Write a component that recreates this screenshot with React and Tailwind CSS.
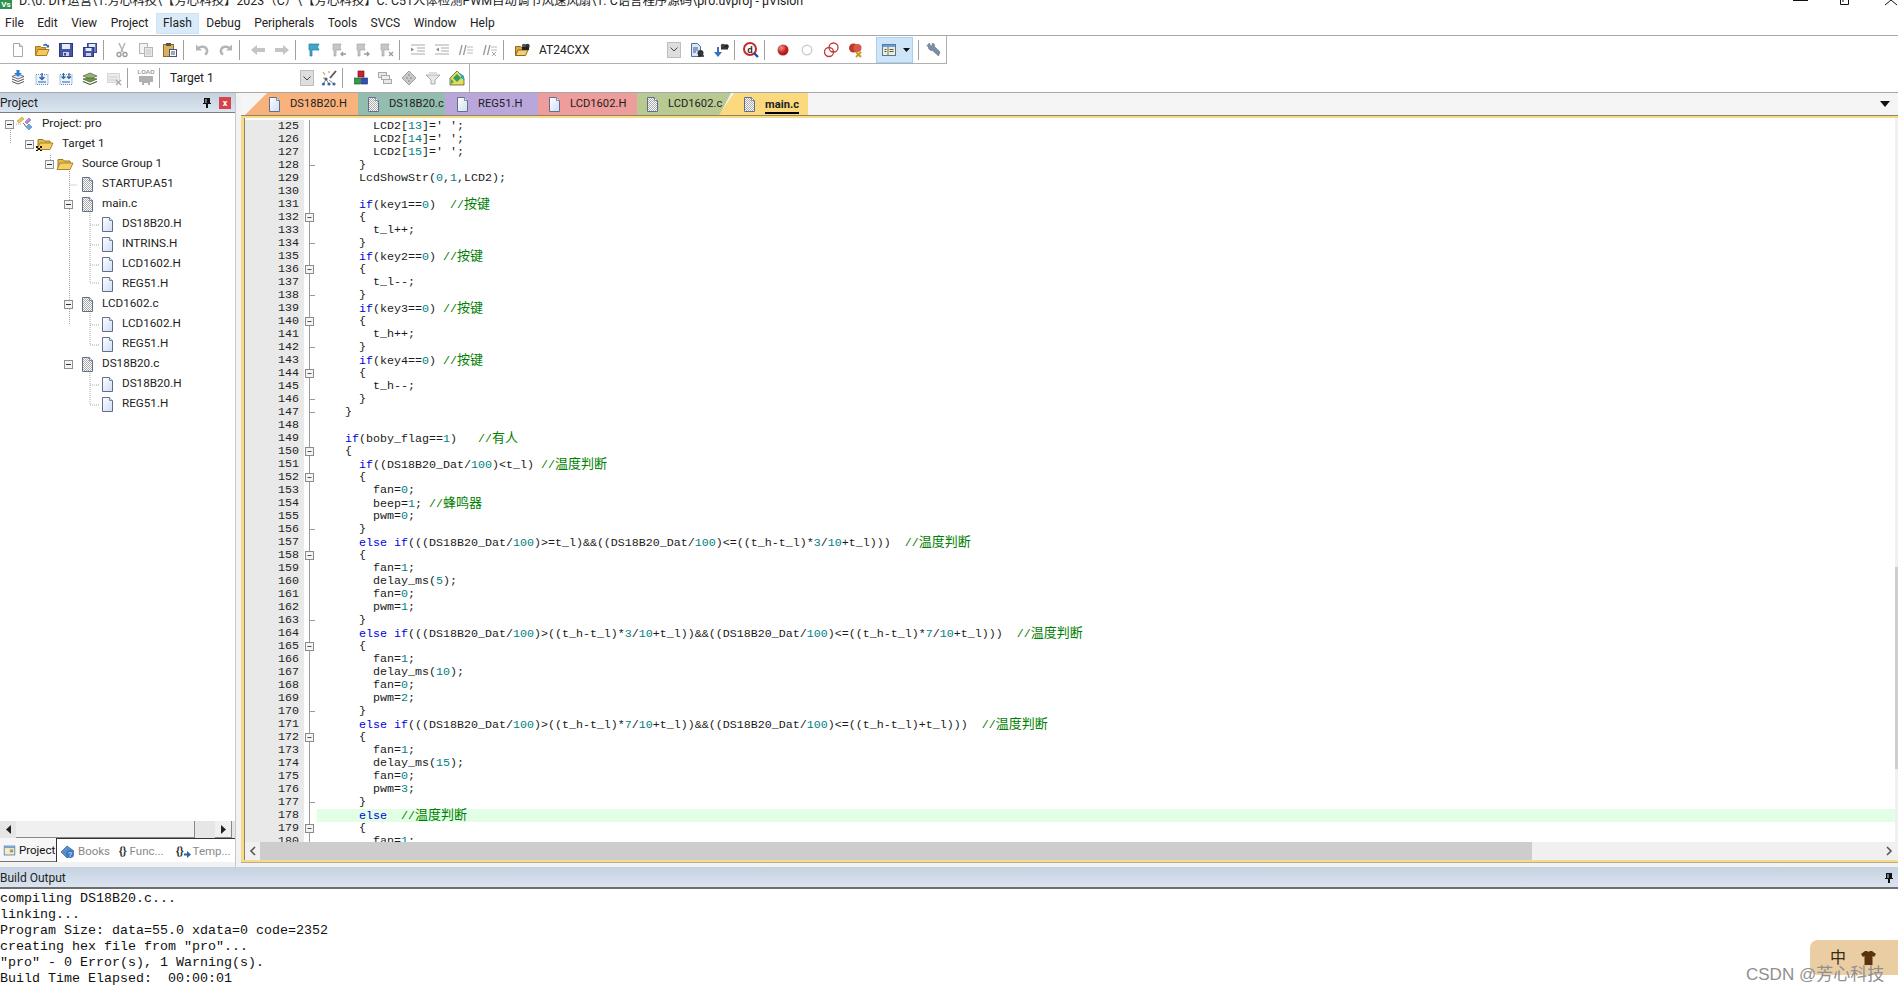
import React from "react";

const UI = { fontFamily: 'Roboto,"Noto Sans CJK SC",sans-serif' };
const MONO = { fontFamily: '"Liberation Mono","Noto Sans CJK SC",monospace' };

const Svg = ({ children, s = 16, w, h, vb = "0 0 16 16" }) => (
  <svg width={w || s} height={h || s} viewBox={vb} className="shrink-0 block">{children}</svg>
);

const DocH = () => (
  <Svg w={13} h={15} vb="0 0 13 15">
    <defs><linearGradient id="dh" x1="0" y1="0" x2="1" y2="1"><stop offset="0" stopColor="#fff" /><stop offset="1" stopColor="#cfdcf2" /></linearGradient></defs>
    <path d="M1.5.5h7l3 3v11h-10z" fill="url(#dh)" stroke="#5f6f8c" />
    <path d="M8.5.5v3h3" fill="#e8eef8" stroke="#7a88a0" />
  </Svg>
);
const DocC = () => (
  <Svg w={13} h={15} vb="0 0 13 15">
    <defs><pattern id="hatch" width="2" height="2" patternUnits="userSpaceOnUse"><rect width="2" height="2" fill="#fff" /><rect width="1" height="1" fill="#a9a9a9" /><rect x="1" y="1" width="1" height="1" fill="#a9a9a9" /></pattern></defs>
    <path d="M1.5.5h7l3 3v11h-10z" fill="url(#hatch)" stroke="#5f6f8c" />
    <path d="M8.5.5v3h3" fill="#eef" stroke="#7a88a0" />
  </Svg>
);
const FolderI = ({ chk }) => (
  <Svg w={18} h={14} vb="0 0 18 14">
    <path d="M2 12V2.5h5l1.500 1.500H14v2" fill="#e5b94e" stroke="#9c7a22" />
    <path d="M1 12.500 4 6h13l-3 6.500z" fill="#f5cf6a" stroke="#a98424" />
    {chk && <g fill="#111"><rect x="0" y="9" width="2" height="2" /><rect x="2" y="11" width="2" height="2" /><rect x="4" y="9" width="2" height="2" /><rect x="0" y="13" width="2" height="1" /><rect x="4" y="13" width="2" height="1" /></g>}
  </Svg>
);
const Exp = () => (
  <span className="w-[9px] h-[9px] border border-[#8f8f8f] bg-[#f4f4f4] flex items-center justify-center shrink-0">
    <span className="w-[5px] h-px bg-[#333]" />
  </span>
);

const G = "#b5b5b5";
const icons = {
  new: <Svg><path d="M3.500 1.500h6l3 3v10h-9z" fill="#fdfdfd" stroke="#a8a8a8" /><path d="M9.500 1.500v3h3" fill="#e8e8e8" stroke="#a8a8a8" /></Svg>,
  open: <Svg><path d="M1.500 13.500v-9h5l1 1h4v2" fill="#e0a93a" stroke="#a67a1e" /><path d="M1.500 13.500 4 7.500h11l-2.500 6z" fill="#f5c95e" stroke="#a67a1e" /><path d="M9 3c2-2 4-1.500 5 .5l1-1v3h-3l1-1c-1-1-2-1.500-3.500-.5z" fill="#3a66b0" /></Svg>,
  save: <Svg><rect x="1.500" y="1.500" width="13" height="13" fill="#4455aa" stroke="#2b3a80" /><rect x="4" y="2" width="8" height="5" fill="#e8ecf8" /><rect x="5" y="10" width="6" height="4" fill="#c9cfe6" /><rect x="6" y="11" width="2" height="2.500" fill="#3a4a90" /></Svg>,
  saveall: <Svg><rect x="5.500" y="1.500" width="9" height="9" fill="#6a7cc4" stroke="#3a4a90" /><rect x="7" y="2" width="6" height="3" fill="#e8ecf8" /><rect x="1.500" y="5.500" width="10" height="9" fill="#4455aa" stroke="#2b3a80" /><rect x="3.500" y="6" width="6" height="3" fill="#e8ecf8" /><rect x="4" y="11" width="5" height="3" fill="#c9cfe6" /></Svg>,
  cut: <Svg><path d="M5 1l4 9M11 1 7 10" stroke={G} strokeWidth="1.500" fill="none" /><circle cx="5" cy="12.500" r="2" fill="none" stroke="#999" strokeWidth="1.300" /><circle cx="11" cy="12.500" r="2" fill="none" stroke="#999" strokeWidth="1.300" /></Svg>,
  copy: <Svg><rect x="1.500" y="1.500" width="8" height="10" fill="#f4f4f4" stroke={G} /><rect x="6.500" y="5.500" width="8" height="9" fill="#e8e8e8" stroke={G} /><path d="M8 8h5M8 10h5M8 12h5" stroke="#c8c8c8" /></Svg>,
  paste: <Svg><rect x="1.500" y="2.500" width="10" height="12" fill="#d8b25c" stroke="#8c6d24" /><rect x="4" y="1" width="5" height="3" fill="#555" /><rect x="7.500" y="7.500" width="7" height="7" fill="#f4f6fb" stroke="#44557a" /><path d="M9 10h4M9 12h4" stroke="#44557a" /></Svg>,
  undo: <Svg><path d="M4 6.500c3-3 8-2 9 1.500.5 2-.5 3.500-2 4.500" fill="none" stroke={G} strokeWidth="2.500" /><path d="M2 2.500v6h6z" fill={G} /></Svg>,
  redo: <Svg><path d="M12 6.500c-3-3-8-2-9 1.500-.5 2 .5 3.500 2 4.500" fill="none" stroke={G} strokeWidth="2.500" /><path d="M14 2.500v6H8z" fill={G} /></Svg>,
  back: <Svg><path d="M1 8l6-5v3h8v4H7v3z" fill="#c4c4c4" /></Svg>,
  fwd: <Svg><path d="M15 8 9 3v3H1v4h8v3z" fill="#c4c4c4" /></Svg>,
  flag: <Svg><path d="M3 2h10l-1.500 3L13 8H6v6H4V8H3z" fill="#3fa8c8" stroke="#1f7f9c" strokeWidth=".7" /></Svg>,
  flag1: <Svg><path d="M3 2h8l-1 3 1 3H6v6H4V8H3z" fill="#c6c6c6" stroke="#a8a8a8" strokeWidth=".7" /><path d="M16 12h-5m2-2-2 2 2 2" stroke="#9a9a9a" strokeWidth="1.300" fill="none" /></Svg>,
  flag2: <Svg><path d="M3 2h8l-1 3 1 3H6v6H4V8H3z" fill="#c6c6c6" stroke="#a8a8a8" strokeWidth=".7" /><path d="M10 12h5m-2-2 2 2-2 2" stroke="#9a9a9a" strokeWidth="1.300" fill="none" /></Svg>,
  flag3: <Svg><path d="M3 2h8l-1 3 1 3H6v6H4V8H3z" fill="#c6c6c6" stroke="#a8a8a8" strokeWidth=".7" /><path d="M11 10l4 4m0-4-4 4" stroke="#9a9a9a" strokeWidth="1.300" fill="none" /></Svg>,
  indent: <Svg><path d="M1 3h14M7 6h8M7 9h8M1 12h14" stroke="#a8a8a8" /><path d="M1 5.500l3 2-3 2z" fill="#8a8a8a" /></Svg>,
  outdent: <Svg><path d="M1 3h14M7 6h8M7 9h8M1 12h14" stroke="#a8a8a8" /><path d="M5 5.500l-3 2 3 2z" fill="#8a8a8a" /></Svg>,
  cmt: <Svg><path d="M4 3 1.500 13M8 3 5.500 13" stroke="#999" strokeWidth="1.300" /><path d="M9 5h6M9 8h6M9 11h6" stroke="#bbb" /></Svg>,
  uncmt: <Svg><path d="M4 3 1.500 13M8 3 5.500 13" stroke="#999" strokeWidth="1.300" /><path d="M9 5h6M9 8h6" stroke="#bbb" /><path d="M10 10l4 4m0-4-4 4" stroke="#aaa" /></Svg>,
  find: <Svg><path d="M1.500 13.500v-9h5l1 1h3v2" fill="#e0a93a" stroke="#8c6a1a" /><path d="M1.500 13.500 4 8h10l-2.500 5.500z" fill="#f2cf78" stroke="#8c6a1a" /><circle cx="10" cy="4" r="2.200" fill="#555" /><circle cx="13.500" cy="4" r="2.200" fill="#333" /><rect x="8" y="5" width="7" height="3" fill="#222" /></Svg>,
  doclist: <Svg><path d="M2.500 1.500h6l3 3v10h-9z" fill="#dbe6f6" stroke="#5a6f95" /><path d="M4 6h5M4 8h5M4 10h3" stroke="#3a5a96" /><circle cx="11.500" cy="11" r="3" fill="#333" /><path d="M9 14h6" stroke="#222" strokeWidth="1.500" /></Svg>,
  bino: <Svg><path d="M4 1v5H1l4 5 4-5H6V1z" transform="translate(0 4)" fill="#3a6ec0" /><circle cx="10" cy="4" r="2.300" fill="#444" /><circle cx="13.500" cy="4.500" r="2.300" fill="#222" /><rect x="8" y="5" width="7" height="2.500" fill="#333" /></Svg>,
  dbg: <Svg><circle cx="7" cy="7" r="6" fill="#fff" stroke="#c62828" strokeWidth="2" /><text x="7" y="10.500" fontSize="9" fontWeight="700" textAnchor="middle" fill="#222" fontFamily="Liberation Sans">d</text><path d="M11 11l4 4" stroke="#2b4d9c" strokeWidth="2.400" /></Svg>,
  bp: <Svg><defs><radialGradient id="rb" cx=".35" cy=".3"><stop offset="0" stopColor="#f4928a" /><stop offset="1" stopColor="#b81c1c" /></radialGradient></defs><circle cx="8" cy="8" r="5.500" fill="url(#rb)" /></Svg>,
  bpo: <Svg><circle cx="8" cy="8" r="4.800" fill="#fff" stroke="#cfcfcf" strokeWidth="1.500" /></Svg>,
  bp2: <Svg><circle cx="6" cy="10" r="4.500" fill="#fff" stroke="#c23a3a" strokeWidth="1.300" /><circle cx="10.500" cy="5.500" r="4.500" fill="none" stroke="#c23a3a" strokeWidth="1.300" /></Svg>,
  bpx: <Svg><circle cx="6.500" cy="6" r="4.500" fill="#c0392b" /><circle cx="10.500" cy="6" r="4" fill="#d8584c" /><path d="M9 10l5 5m0-5-5 5" stroke="#c69a1e" strokeWidth="2" /></Svg>,
  win: <Svg><rect x="1.500" y="2.500" width="13" height="11" fill="#f6edc0" stroke="#4a7ab0" /><rect x="2" y="3" width="12" height="2" fill="#6aa0d8" /><path d="M7 5v8" stroke="#4a7ab0" /><path d="M8.500 7.500h4M8.500 9.500h4M3.500 7.500h2M3.500 9.500h2" stroke="#555" /></Svg>,
  wrench: <Svg><path d="M2 3.500 4.500 1l1 3 2-.5-.5-2c2-.5 3 1 2.500 3L15 10l-1.500 4-6-5.500c-2 .5-4-1-4-3z" fill="#7d8ea6" stroke="#4f5f78" strokeWidth=".5" /></Svg>,
  trans: <Svg><path d="M2 6.500 8 4l6 2.500L8 9z" fill="#eef" stroke="#444" strokeWidth=".8" /><path d="M2 9l6 2.500L14 9M2 11.500 8 14l6-2.500" fill="none" stroke="#444" strokeWidth=".9" /><path d="M6.500 0h3v3H12L8 7 4 3h2.500z" fill="#2f7fd0" /></Svg>,
  b1: <Svg><rect x="2" y="4.500" width="12" height="10" fill="#eef4fb" stroke="#5a8ab8" strokeDasharray="1 1" /><path d="M8 3v6M5.500 7 8 9.500 10.500 7" stroke="#2a62a8" strokeWidth="1.400" fill="none" /><path d="M4 12h8" stroke="#2a62a8" /></Svg>,
  b2: <Svg><rect x="2" y="4.500" width="12" height="10" fill="#eef4fb" stroke="#5a8ab8" strokeDasharray="1 1" /><path d="M5.500 3v5M11 3v5M3.500 6.500l2 2 2-2M9 6.500l2 2 2-2" stroke="#2a62a8" strokeWidth="1.200" fill="none" /><path d="M4 12h8" stroke="#2a62a8" /></Svg>,
  b3: <Svg><path d="M1 6l7-3 7 3-7 3z" fill="#9ab07a" stroke="#50603a" strokeWidth=".7" /><path d="M1 9l7 3 7-3-7-1z" fill="#6f9a4a" stroke="#3d5a28" strokeWidth=".7" /><path d="M1 11.500 8 14.500l7-3" fill="none" stroke="#3d5a28" strokeWidth="1.100" /></Svg>,
  b4: <Svg><rect x="1.500" y="3.500" width="12" height="9" fill="#ececec" stroke={G} strokeDasharray="1 1" /><path d="M3 7h9M3 10h9" stroke="#ccc" /><path d="M10 10l5 5m0-5-5 5" stroke="#a8a8a8" strokeWidth="1.300" /></Svg>,
  load: <Svg w={18} h={20} vb="0 0 18 20"><text x="9" y="6" fontSize="6" fontWeight="700" textAnchor="middle" fill="#999" fontFamily="Liberation Sans">LOAD</text><path d="M2 8h14v6h-3v3h-2v-2H7v2H5v-3H2z" fill="#b0b0b0" /></Svg>,
  wand: <Svg><path d="M9 8 15 1" stroke="#555" strokeWidth="1.800" /><path d="M4 5 2 2M8 3V1M2 8h2" stroke="#d08a20" /><circle cx="5" cy="9" r="1.600" fill="#3a66b0" /><circle cx="2.500" cy="14" r="1.600" fill="#3a66b0" /><circle cx="8" cy="14" r="1.600" fill="#3a66b0" /><circle cx="13" cy="14" r="1.600" fill="#3a66b0" /><path d="M5 9 2.500 14M5 9l3 5M8 10l5 4" stroke="#5a5a5a" strokeWidth=".7" /></Svg>,
  cube: <Svg><rect x="5" y="1" width="6" height="6" fill="#d3202a" stroke="#5a1010" strokeWidth=".6" /><rect x="1.500" y="8" width="6" height="6" fill="#2e9e4a" stroke="#124a22" strokeWidth=".6" /><rect x="8.500" y="8" width="6" height="6" fill="#3050c0" stroke="#14245c" strokeWidth=".6" /></Svg>,
  win2: <Svg><rect x="1.500" y="2.500" width="8" height="5" fill="#e8e8e8" stroke="#a9a9a9" /><rect x="4.500" y="5.500" width="8" height="4" fill="#f0f0f0" stroke="#a9a9a9" /><rect x="6.500" y="9.500" width="8" height="4" fill="#e8e8e8" stroke="#a9a9a9" /></Svg>,
  dia: <Svg><path d="M8 1l7 7-7 7-7-7z" fill="#c9c9c9" stroke="#a0a0a0" /><path d="M8 4v2M5 8h2M9 8h2M8 10v2" stroke="#888" /></Svg>,
  fun: <Svg><path d="M1 5h14l-5 5v4H6v-4z" fill="#e8e8e8" stroke="#aaa" /><path d="M4 2h8v3H4z" fill="#ddd" /></Svg>,
  gem: <Svg><path d="M8 1l7 7v7H1V8z" fill="#e8dd50" stroke="#444" strokeWidth=".7" /><path d="M8 4l4 4-4 4-4-4z" fill="#2f9e60" /><path d="M11 3l4 3v4l-3-2z" fill="#2aa8c8" /><path d="M2 9l3 3-3 2z" fill="#38b068" /></Svg>,
};

const Tool = ({ n }) => <span className="w-6 h-[26px] flex items-center justify-center shrink-0">{icons[n]}</span>;
const Sep = () => <span className="w-2 h-5 shrink-0 flex justify-start pl-[1px]"><span className="w-px h-full bg-[#a0a0a0]" /></span>;
const Combo = () => (
  <span className="w-[14px] h-[16px] bg-[#dedede] border border-[#bdbdbd] flex items-center justify-center shrink-0">
    <svg width="8" height="5" viewBox="0 0 8 5"><path d="M.5.500 4 4 7.500.5" fill="none" stroke="#444" /></svg>
  </span>
);

const menus = ["File", "Edit", "View", "Project", "Flash", "Debug", "Peripherals", "Tools", "SVCS", "Window", "Help"];

const tabs = [
  { t: "DS18B20.H", w: "w-[113px]", bg: "bg-[#f9b27c]", c: "[clip-path:polygon(22px_0,100%_0,100%_100%,0_100%)]", pl: "pl-[23px]", I: DocH },
  { t: "DS18B20.c", w: "w-[87px]", bg: "bg-[#93bdae]", c: "", pl: "pl-[9px]", I: DocC },
  { t: "REG51.H", w: "w-[93px]", bg: "bg-[#b9a6da]", c: "", pl: "pl-[11px]", I: DocH },
  { t: "LCD1602.H", w: "w-[99px]", bg: "bg-[#ee9c9c]", c: "", pl: "pl-[10px]", I: DocH },
  { t: "LCD1602.c", w: "w-[94px]", bg: "bg-[#b8c992]", c: "[clip-path:polygon(0_0,100%_0,88%_100%,0_100%)]", pl: "pl-[9px]", I: DocC },
];

const tree = [
  { l: 5, t: "Project: pro", e: 1, I: "proj" },
  { l: 25, t: "Target 1", e: 1, I: "tgt" },
  { l: 45, t: "Source Group 1", e: 1, I: "fold" },
  { l: 64, t: "STARTUP.A51", I: "c" },
  { l: 64, t: "main.c", e: 1, I: "c" },
  { l: 84, t: "DS18B20.H", I: "h", n: 1 },
  { l: 84, t: "INTRINS.H", I: "h", n: 1 },
  { l: 84, t: "LCD1602.H", I: "h", n: 1 },
  { l: 84, t: "REG51.H", I: "h", n: 1 },
  { l: 64, t: "LCD1602.c", e: 1, I: "c" },
  { l: 84, t: "LCD1602.H", I: "h", n: 1 },
  { l: 84, t: "REG51.H", I: "h", n: 1 },
  { l: 64, t: "DS18B20.c", e: 1, I: "c" },
  { l: 84, t: "DS18B20.H", I: "h", n: 1 },
  { l: 84, t: "REG51.H", I: "h", n: 1 },
];

const ProjI = () => (
  <Svg w={18} h={16} vb="0 0 18 16">
    <path d="M1 5l5-4 2 2-5 4z" fill="#ecc94b" stroke="#a38a20" strokeWidth=".5" />
    <path d="M9 6l4-4 2 2-4 4z" fill="#c08ad8" stroke="#7a4a9a" strokeWidth=".5" />
    <path d="M10 11l3-3 3 3-3 3z" fill="#6aa8e0" stroke="#3a6ea0" strokeWidth=".5" />
    <path d="M7 7c2 1 2 3 3 4" stroke="#666" fill="none" />
  </Svg>
);

const L8 = 8, L6 = 6, L4 = 4;
const code = [
  [125, L8, "LCD2[13]=' ';"], [126, L8, "LCD2[14]=' ';"], [127, L8, "LCD2[15]=' ';"],
  [128, L6, "}", "e"], [129, L6, "LcdShowStr(0,1,LCD2);"], [130, 0, ""],
  [131, L6, "if(key1==0)  //按键"], [132, L6, "{", "b"], [133, L8, "t_l++;"], [134, L6, "}", "e"],
  [135, L6, "if(key2==0) //按键"], [136, L6, "{", "b"], [137, L8, "t_l--;"], [138, L6, "}", "e"],
  [139, L6, "if(key3==0) //按键"], [140, L6, "{", "b"], [141, L8, "t_h++;"], [142, L6, "}", "e"],
  [143, L6, "if(key4==0) //按键"], [144, L6, "{", "b"], [145, L8, "t_h--;"], [146, L6, "}", "e"],
  [147, L4, "}", "e"], [148, 0, ""],
  [149, L4, "if(boby_flag==1)   //有人"], [150, L4, "{", "b"],
  [151, L6, "if((DS18B20_Dat/100)<t_l) //温度判断"], [152, L6, "{", "b"],
  [153, L8, "fan=0;"], [154, L8, "beep=1; //蜂鸣器"], [155, L8, "pwm=0;"], [156, L6, "}", "e"],
  [157, L6, "else if(((DS18B20_Dat/100)>=t_l)&&((DS18B20_Dat/100)<=((t_h-t_l)*3/10+t_l)))  //温度判断"],
  [158, L6, "{", "b"], [159, L8, "fan=1;"], [160, L8, "delay_ms(5);"], [161, L8, "fan=0;"], [162, L8, "pwm=1;"], [163, L6, "}", "e"],
  [164, L6, "else if(((DS18B20_Dat/100)>((t_h-t_l)*3/10+t_l))&&((DS18B20_Dat/100)<=((t_h-t_l)*7/10+t_l)))  //温度判断"],
  [165, L6, "{", "b"], [166, L8, "fan=1;"], [167, L8, "delay_ms(10);"], [168, L8, "fan=0;"], [169, L8, "pwm=2;"], [170, L6, "}", "e"],
  [171, L6, "else if(((DS18B20_Dat/100)>((t_h-t_l)*7/10+t_l))&&((DS18B20_Dat/100)<=((t_h-t_l)+t_l)))  //温度判断"],
  [172, L6, "{", "b"], [173, L8, "fan=1;"], [174, L8, "delay_ms(15);"], [175, L8, "fan=0;"], [176, L8, "pwm=3;"], [177, L6, "}", "e"],
  [178, L6, "else  //温度判断"], [179, L6, "{", "b"], [180, L8, "fan=1;"],
];

function Comment({ s }) {
  return (
    <span className="text-[#008000]">
      {s.split(/([\u4e00-\u9fff]+)/).map((p, i) =>
        /[\u4e00-\u9fff]/.test(p) ? <span key={i} className="text-[13px]">{p}</span> : <span key={i}>{p}</span>
      )}
    </span>
  );
}

function Code({ s }) {
  const out = [];
  const re = /(\/\/.*$)|\b(if|else)\b|(?<![A-Za-z_0-9])(\d+)(?![A-Za-z_0-9])/g;
  let last = 0, m, k = 0;
  while ((m = re.exec(s))) {
    if (m.index > last) out.push(<span key={k++}>{s.slice(last, m.index)}</span>);
    if (m[1]) out.push(<Comment key={k++} s={m[1]} />);
    else if (m[2]) out.push(<span key={k++} className="text-[#0000e0]">{m[2]}</span>);
    else out.push(<span key={k++} className="text-[#007f86]">{m[3]}</span>);
    last = m.index + m[0].length;
  }
  if (last < s.length) out.push(<span key={k++}>{s.slice(last)}</span>);
  return out;
}

const Fold = ({ f }) => (
  <svg width="13" height="13" viewBox="0 0 13 13" className="block shrink-0">
    <path d="M5.500 0v13" stroke="#9a9a9a" />
    {f === "e" && <path d="M5.500 6.500H11" stroke="#9a9a9a" />}
    {f === "b" && <g><rect x="1.500" y="2.500" width="8" height="8" fill="#f4f4f4" stroke="#8a8a8a" /><path d="M3.500 6.500h4" stroke="#555" /></g>}
  </svg>
);

const build = [
  "compiling DS18B20.c...",
  "linking...",
  "Program Size: data=55.0 xdata=0 code=2352",
  'creating hex file from "pro"...',
  '"pro" - 0 Error(s), 1 Warning(s).',
  "Build Time Elapsed:  00:00:01",
];

const Pin = () => (
  <svg width="10" height="11" viewBox="0 0 10 11" className="block"><path d="M2 1h6v5h1v1H6v4H4V7H1V6h1zM3.500 2v4h1V2z" fill="#111" /></svg>
);

export default function App() {
  return (
    <div className="relative w-[1898px] h-[992px] overflow-hidden bg-white flex flex-col text-[12px] text-[#222]" style={UI}>
      {/* title */}
      <div className="h-3 flex items-start overflow-hidden shrink-0">
        <span className="w-3 h-[9px] bg-[#2f8f4f] text-white text-[8px] leading-[9px] font-bold text-center shrink-0 mr-[7px]">Vs</span>
        <span className="text-[12.400px] leading-[14px] -mt-[6px] whitespace-pre text-[#222]">D:\0. DIY运营\1.芳心科技\【芳心科技】2023（C）\【芳心科技】C. C51人体检测PWM自动调节风速风扇\1. C语言程序源码\pro.uvproj - µVision</span>
        <span className="flex-1" />
        <svg width="105" height="6" viewBox="0 0 105 6" className="block shrink-0">
          <path d="M0 .5h15" stroke="#111" /><path d="M47.500 0v4.500h8V0M50 0v2" stroke="#111" fill="none" /><path d="M92 5l6-5 6 5" stroke="#111" fill="none" />
        </svg>
      </div>
      {/* menu */}
      <div className="h-6 shrink-0 flex items-center border-b border-[#a8a8a8] pb-[1px] -ml-px">
        {menus.map((m) => (
          <span key={m} className={`h-[21px] flex items-center px-[6px] mr-[1.500px] text-[12px] ${m === "Flash" ? "bg-[#d9ebf9] border border-[#cde4f7]" : ""}`}>{m}</span>
        ))}
      </div>
      {/* toolbar 1 */}
      <div className="h-[28px] shrink-0 flex">
        <div className="w-[947px] h-[28px] flex items-center pl-[6px] border-b border-r border-[#b0b0b0]">
          <Tool n="new" /><Tool n="open" /><Tool n="save" /><Tool n="saveall" /><Sep />
          <Tool n="cut" /><Tool n="copy" /><Tool n="paste" /><Sep />
          <Tool n="undo" /><Tool n="redo" /><Sep />
          <Tool n="back" /><Tool n="fwd" /><Sep />
          <Tool n="flag" /><Tool n="flag1" /><Tool n="flag2" /><Tool n="flag3" /><Sep />
          <Tool n="indent" /><Tool n="outdent" /><Tool n="cmt" /><Tool n="uncmt" /><Sep />
          <Tool n="find" />
          <span className="w-[133px] pl-[5px] text-[12px]">AT24CXX</span>
          <Combo />
          <span className="w-1 shrink-0" />
          <Tool n="doclist" /><Tool n="bino" /><Sep />
          <span className="-ml-[2px]"><Tool n="dbg" /></span><Sep />
          <Tool n="bp" /><Tool n="bpo" /><Tool n="bp2" /><Tool n="bpx" />
          <span className="w-[9px] shrink-0" />
          <span className="w-[37px] h-[26px] bg-[#cde4f9] border border-[#a8d0f0] flex items-center pl-[4px] gap-[6px] shrink-0">
            {icons.win}
            <svg width="7" height="4" viewBox="0 0 7 4"><path d="M0 0h7L3.500 4z" fill="#111" /></svg>
          </span>
          <span className="w-1 shrink-0" /><Sep />
          <span className="-ml-[4px]"><Tool n="wrench" /></span>
        </div>
      </div>
      {/* toolbar 2 */}
      <div className="h-[28px] shrink-0 flex">
        <div className="w-[470px] h-[28px] flex items-center pl-[6px] border-r border-[#b0b0b0]">
          <Tool n="trans" /><Tool n="b1" /><Tool n="b2" /><Tool n="b3" /><Tool n="b4" /><Sep />
          <span className="ml-0"><Tool n="load" /></span><Sep />
          <span className="w-[135px] pl-[4px] text-[12px]">Target 1</span>
          <Combo />
          <span className="ml-[3px]"><Tool n="wand" /></span><Sep />
          <Tool n="cube" /><Tool n="win2" /><Tool n="dia" /><Tool n="fun" /><Tool n="gem" />
        </div>
      </div>
      {/* centre */}
      <div className="h-[775px] shrink-0 flex border-t border-[#a8a8a8] bg-[#f2f2f2]">
        {/* project */}
        <div className="w-[236px] shrink-0 flex flex-col bg-white border-r border-[#c8c8c8]">
          <div className="h-5 shrink-0 flex items-center border-b border-[#7d7d7d] bg-gradient-to-b from-[#c4d1e0] to-[#dbe5f0] pr-[4px]">
            <span className="flex-1 text-[12px] leading-none">Project</span>
            <span className="mr-[7px]"><Pin /></span>
            <span className="w-3 h-3 bg-[#d8434a] text-white text-[9px] leading-3 text-center font-bold">x</span>
          </div>
          <div className="relative flex-1 pt-[1px]">
            <svg width="130" height="320" viewBox="0 0 130 320" className="absolute left-0 top-0 pointer-events-none">
              <g stroke="#a8a8a8" strokeDasharray="1 1" fill="none">
                <path d="M10.500 11v20M30.500 35v-4M50.500 42v10M69.500 56v156" />
                <path d="M90 92v78H99M90 112h9M90 132h9M90 152h9" />
                <path d="M90 192v40h9M90 212h9" />
                <path d="M90 252v40h9M90 272h9" />
                <path d="M69.500 72h8M16 11h6" />
              </g>
            </svg>
            <div className="relative">
              {tree.map((r, i) => (
                <div key={i} className="h-5 flex items-center whitespace-pre" style={{ paddingLeft: r.l }}>
                  {r.e ? <Exp /> : <span className="w-[9px] shrink-0" />}
                  <span className={`flex justify-center shrink-0 ${r.I === "proj" || r.I === "tgt" || r.I === "fold" ? "w-[20px] ml-[1px] mr-[3px]" : "w-[14px] ml-[7px] mr-[3px]"}`}>
                    {r.I === "proj" ? <ProjI /> : r.I === "tgt" ? <FolderI chk /> : r.I === "fold" ? <FolderI /> : r.I === "c" ? <DocC /> : <DocH />}
                  </span>
                  <span className={`text-[11.700px] ${r.I === "proj" || r.I === "tgt" || r.I === "fold" ? "pl-[4px]" : "pl-[5px]"}`}>{r.t}</span>
                </div>
              ))}
            </div>
          </div>
          <div className="h-[17px] shrink-0 flex items-stretch bg-[#e6e6e6] pr-[3px]">
            <span className="w-[16px] flex items-center justify-center"><svg width="5" height="9" viewBox="0 0 5 9"><path d="M5 0v9L0 4.500z" fill="#222" /></svg></span>
            <span className="w-[179px] bg-[#f0f0f0] border-r border-b border-[#888]" />
            <span className="flex-1" />
            <span className="w-[17px] bg-[#f0f0f0] border-r border-b border-[#888] flex items-center justify-center"><svg width="5" height="9" viewBox="0 0 5 9"><path d="M0 0v9l5-4.500z" fill="#222" /></svg></span>
          </div>
          <div className="h-[24px] shrink-0 flex items-stretch bg-[#f8f8f8] text-[11.500px] text-[#8a8a8a] leading-none">
            <span className="w-[56px] flex items-center gap-[3px] pl-[3px] pt-[2px] bg-[#f6f6f6] text-[#111] border-b border-[#777]">
              <Svg s={13}><rect x="1.500" y="2.500" width="13" height="11" fill="#f6edc0" stroke="#4a7ab0" /><rect x="2" y="3" width="12" height="2" fill="#6aa0d8" /><path d="M8.500 7.500h4M8.500 9.500h4" stroke="#555" /></Svg>
              Project
            </span>
            <span className="w-[58px] flex items-center gap-[2px] pl-[3px] pt-[2px] bg-white border-t border-l border-[#333] border-l-[#333]">
              <Svg s={16}><path d="M1 8l6-6 7 5-7 7z" fill="#5b8fc8" stroke="#345f96" strokeWidth=".7" /><circle cx="10" cy="10" r="4" fill="#3a78c8" /><text x="10" y="13" fontSize="7" fill="#fff" textAnchor="middle" fontFamily="Liberation Sans">?</text></Svg>
              Books
            </span>
            <span className="w-[58px] flex items-center gap-[3px] pl-[5px] pt-[2px] bg-white border-t border-[#333]">
              <span className="font-bold text-[#333]">{"{}"}</span> Func...
            </span>
            <span className="flex-1 flex items-center pl-[4px] pt-[2px] bg-white border-t border-[#333]">
              <span className="font-bold text-[#333]">{"{}"}</span>
              <svg width="7" height="7" viewBox="0 0 7 7" className="mt-[5px] mr-[2px]"><path d="M0 2.500h3V0l4 3.500L3 7V4.500H0z" fill="#2a62a8" /></svg>
              Temp...
            </span>
          </div>
          <div className="flex-1 max-h-[5px] bg-[#f2f2f2]" />
        </div>
        <div className="w-[5px] shrink-0" />
        {/* editor */}
        <div className="flex-1 min-w-0 flex flex-col">
          <div className="h-[22px] shrink-0 flex items-stretch bg-[#f5f5f5]">
            <span className="w-[4px] shrink-0" />
            {tabs.map((t) => {
              const I = t.I;
              return (
                <span key={t.t} className={`${t.w} ${t.bg} ${t.c} ${t.pl} flex items-center gap-[9px] shrink-0 text-[11.200px] text-[#222] whitespace-pre`}>
                  <I />{t.t}
                </span>
              );
            })}
            <span className="relative w-[89px] -ml-[12px] pl-[24px] gap-[9px] bg-[#fbd97c] [clip-path:polygon(15px_0,100%_0,100%_100%,0_100%)] flex items-center shrink-0 font-bold text-[11.200px]">
              <DocC />
              <span className="border-b-2 border-black leading-[15px] -mb-[2px]">main.c</span>
            </span>
            <span className="flex-1" />
            <span className="w-[22px] flex items-center justify-center pr-[4px] shrink-0"><svg width="10" height="6" viewBox="0 0 10 6"><path d="M0 0h10L5 6z" fill="#111" /></svg></span>
          </div>
          <div className="flex-1 min-h-0 flex flex-col border-t-[1px] border-[#8c8566] bg-white">
            <div className="flex-1 min-h-0 flex flex-col border-t-[2px] border-l-[3px] border-b-[2px] border-[#f9d98a]">
              <div className="flex-1 min-h-0 flex overflow-hidden">
                <div className="flex-1 min-w-0 overflow-hidden pt-[2px] border-l border-l-[#8c8566]">
                  {code.map(([n, ind, s, f]) => (
                    <div key={n} className="flex h-[13px] text-[11.670px] leading-[13px] text-[#1a1a1a]" style={MONO}>
                      <span className="w-[59px] pr-[5px] text-right bg-[#e9e9e9] text-[#222] shrink-0 whitespace-pre">{n}</span>
                      <Fold f={f} />
                      <span className={`flex-1 whitespace-pre ${n === 178 ? "bg-[#e2ffe6]" : ""}`} style={{ paddingLeft: ind * 7 }}>
                        <Code s={s} />
                      </span>
                    </div>
                  ))}
                </div>
                <div className="w-[3px] shrink-0 bg-[#f0f0f0] pt-[449px]">
                  <div className="h-[202px] bg-[#cdcdcd]" />
                </div>
              </div>
              <div className="h-[18px] shrink-0 flex items-center bg-[#f0f0f0] border-l border-l-[#8c8566]">
                <span className="w-[15px] flex justify-center shrink-0"><svg width="7" height="10" viewBox="0 0 7 10"><path d="M6 1 2 5l4 4" fill="none" stroke="#555" strokeWidth="1.600" /></svg></span>
                <span className="w-[1272px] h-full bg-[#cdcdcd] shrink-0" />
                <span className="flex-1" />
                <span className="w-[17px] flex justify-center shrink-0"><svg width="7" height="10" viewBox="0 0 7 10"><path d="M1 1l4 4-4 4" fill="none" stroke="#555" strokeWidth="1.600" /></svg></span>
              </div>
            </div>
          </div>
          <div className="h-[5px] shrink-0 border-t border-[#b8ae8c]" />
        </div>
      </div>
      {/* build */}
      <div className="h-[22px] shrink-0 flex items-center border-b-2 border-[#6e6e6e] bg-gradient-to-b from-[#c4d1e0] to-[#dbe5f0] pr-[4px]">
        <span className="flex-1 text-[12px] leading-none pt-[2px]">Build Output</span>
        <Pin />
      </div>
      <div className="flex-1 pt-[2px] text-[13.330px] leading-[16px] text-[#111] whitespace-pre" style={MONO}>
        {build.map((b) => <div key={b} className="h-4">{b}</div>)}
      </div>
      {/* IME + watermark */}
      <div className="absolute right-0 top-[940px] w-[88px] h-[35px] rounded-l-[8px] bg-[#ebcda4] flex items-center pl-[20px] gap-[15px]" >
        <span className="text-[16px] text-[#3a2a10] leading-none">中</span>
        <svg width="15" height="14" viewBox="0 0 15 14"><path d="M4 0h2c.5 1 2.500 1 3 0h2l4 3-2 3-1.500-1v9h-8V5L2 6 0 3z" fill="#5a3410" /></svg>
      </div>
      <div className="absolute left-[1746px] top-[965px] text-[17px] leading-5 text-[#8f8f8f] whitespace-pre" style={{ fontFamily: '"Liberation Sans","Noto Sans CJK SC",sans-serif' }}>CSDN @芳心科技</div>
    </div>
  );
}
